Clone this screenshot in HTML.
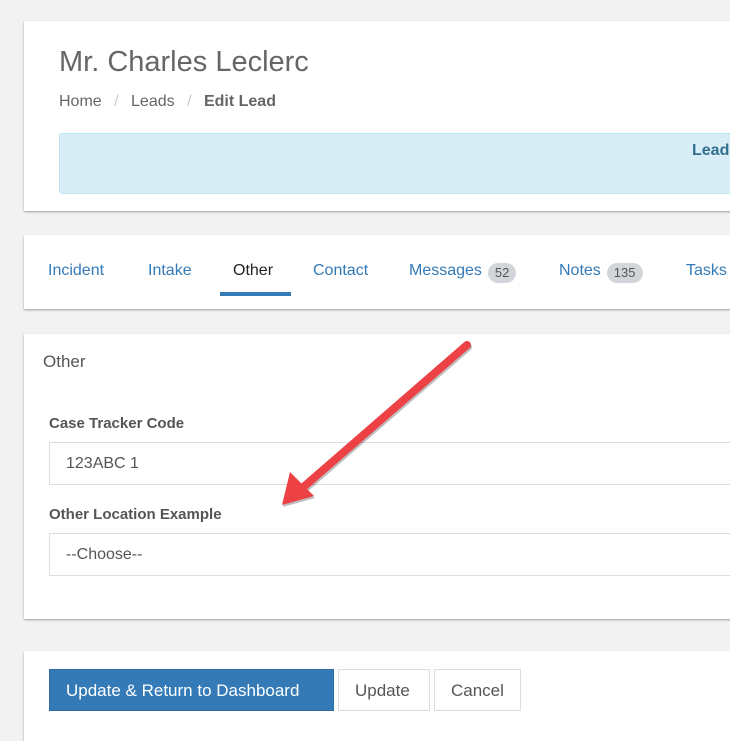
<!DOCTYPE html><html><head><style>
body{margin:0;width:730px;height:720px;overflow:hidden;background:#f2f2f2;font-family:"Liberation Sans",sans-serif;position:relative}
.card{position:absolute;left:24px;width:720px;background:#fff;box-shadow:0 1px 2px rgba(0,0,0,.35)}
.t{position:absolute;white-space:nowrap}
.nav{color:#337ab7;font-size:16px;top:26px;line-height:20px}
.badge{display:inline-block;background:#d2d6da;color:#555;border-radius:10px;font-size:13px;line-height:16px;padding:2px 7px;margin-left:6px;vertical-align:-2px}
label{position:absolute;font-weight:bold;color:#555;font-size:15px}
.inp{position:absolute;left:25px;width:700px;height:43px;border:1px solid #ddd;box-sizing:border-box;font-size:16px;color:#555;padding:12px 0 0 16px}
.btn{position:absolute;top:18px;height:42px;box-sizing:border-box;border:1px solid #ddd;font-size:17px;color:#555;padding:11px 16px 0}
</style></head><body>
<div class="card" style="top:21px;height:190px">
<div class="t" style="left:35px;top:25px;font-size:29px;color:#666;font-weight:300">Mr. Charles Leclerc</div>
<div class="t" style="left:35px;top:72px;font-size:16px;color:#666">Home <span style="color:#ccc;margin:0 8px">/</span> Leads <span style="color:#ccc;margin:0 8px">/</span> <b>Edit Lead</b></div>
<div style="position:absolute;left:35px;top:112px;width:700px;height:59px;background:#d9edf7;border:1px solid #bce8f1;border-radius:3px"></div>
<div class="t" style="left:668px;top:121px;font-size:16px;font-weight:bold;color:#31708f">Lead</div>
</div>
<div class="card" style="top:235px;height:74px">
<div class="t nav" style="left:24px">Incident</div>
<div class="t nav" style="left:124px">Intake</div>
<div class="t nav" style="left:209px;color:#222">Other</div>
<div style="position:absolute;left:196px;top:57px;width:71px;height:4px;background:#337ab7"></div>
<div class="t nav" style="left:289px">Contact</div>
<div class="t nav" style="left:385px">Messages<span class="badge">52</span></div>
<div class="t nav" style="left:535px">Notes<span class="badge">135</span></div>
<div class="t nav" style="left:662px">Tasks</div>
</div>
<div class="card" style="top:334px;height:285px">
<div class="t" style="left:19px;top:18px;font-size:17px;color:#555">Other</div>
<label style="left:25px;top:81px">Case Tracker Code</label>
<div class="inp" style="top:108px">123ABC 1</div>
<label style="left:25px;top:172px">Other Location Example</label>
<div class="inp" style="top:199px">--Choose--</div>
</div>
<div class="card" style="top:651px;height:90px">
<div class="btn" style="left:25px;width:285px;background:#337ab7;border-color:#2e6da4;color:#fff">Update &amp; Return to Dashboard</div>
<div class="btn" style="left:314px;width:92px">Update</div>
<div class="btn" style="left:410px;width:87px">Cancel</div>
</div>
<svg style="position:absolute;left:0;top:0" width="730" height="720">
<g transform="translate(1,2)" opacity=".25"><line x1="467" y1="345" x2="300" y2="490" stroke="#000" stroke-width="8" stroke-linecap="round"/><polygon points="282,505 290,472 314,496" fill="#000"/></g>
<line x1="467" y1="345" x2="300" y2="490" stroke="#ed4245" stroke-width="8" stroke-linecap="round"/>
<polygon points="282,505 290,472 314,496" fill="#ed4245"/>
</svg>
</body></html>
